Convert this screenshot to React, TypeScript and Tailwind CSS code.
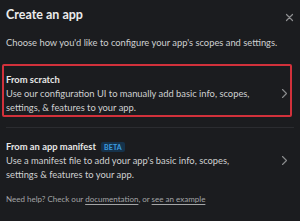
import React from 'react';

const Chevron: React.FC = () => (
  <svg width="7" height="11" viewBox="0 0 7 11" fill="none" className="shrink-0">
    <path d="M1.5 1.5l4 4-4 4" stroke="#8b8c8e" strokeWidth="1.1" strokeLinecap="round" strokeLinejoin="round" />
  </svg>
);

const Option: React.FC<{ title: string; badge?: string; lines: string[]; selected?: boolean }> = ({
  title, badge, lines, selected,
}) => (
  <div
    className={`flex items-center justify-between ${
      selected ? '-ml-[4px] mr-[2px] rounded-[2px] border-2 border-[#d2313b] pl-[2px] pr-[2px] pt-[7px] pb-[1px]' : 'pr-[6px]'
    }`}
  >
    <div>
      <div className="flex items-center gap-[5px] text-[9.4px] font-bold leading-[14px] text-[#e6e6e6]">
        {title}
        {badge && (
          <span className="rounded-[2px] bg-[#15324b] px-[3px] text-[7px] font-bold leading-[10px] tracking-wide text-[#3d9ee0]">
            {badge}
          </span>
        )}
      </div>
      {lines.map(l => (
        <div key={l} className="text-[9.35px] leading-[13.5px] text-[#cfd0d1]">{l}</div>
      ))}
    </div>
    <Chevron />
  </div>
);

export default function App() {
  return (
    <div className="h-[221px] w-[300px] overflow-hidden bg-[#1b1c1f] px-[6px] font-['Lato','Noto_Sans',sans-serif]">
      <div className="flex items-start justify-between pt-[5px]">
        <h1 className="text-[12.5px] font-bold leading-[20px] text-[#ececec]">Create an app</h1>
        <svg width="9" height="9" viewBox="0 0 9 9" className="mt-[8px]">
          <path d="M1.5 1.5l6 6M7.5 1.5l-6 6" stroke="#8e8f91" strokeWidth="1.2" strokeLinecap="round" />
        </svg>
      </div>
      <p className="mt-[11px] text-[9.35px] leading-[14px] text-[#cfd0d1]">
        Choose how you'd like to configure your app's scopes and settings.
      </p>
      <div className="mt-[14px]">
        <Option
          selected
          title="From scratch"
          lines={['Use our configuration UI to manually add basic info, scopes,', 'settings, & features to your app.']}
        />
      </div>
      <div className="mt-[10px] border-t border-[#2b2c30]" />
      <div className="mt-[12px]">
        <Option
          title="From an app manifest"
          badge="BETA"
          lines={["Use a manifest file to add your app's basic info, scopes,", 'settings & features to your app.']}
        />
      </div>
      <p className="mt-[12px] text-[8px] leading-[12px] text-[#a3a4a6]">
        Need help? Check our <span className="underline underline-offset-2">documentation</span>, or{' '}
        <span className="underline underline-offset-2">see an example</span>
      </p>
    </div>
  );
}
